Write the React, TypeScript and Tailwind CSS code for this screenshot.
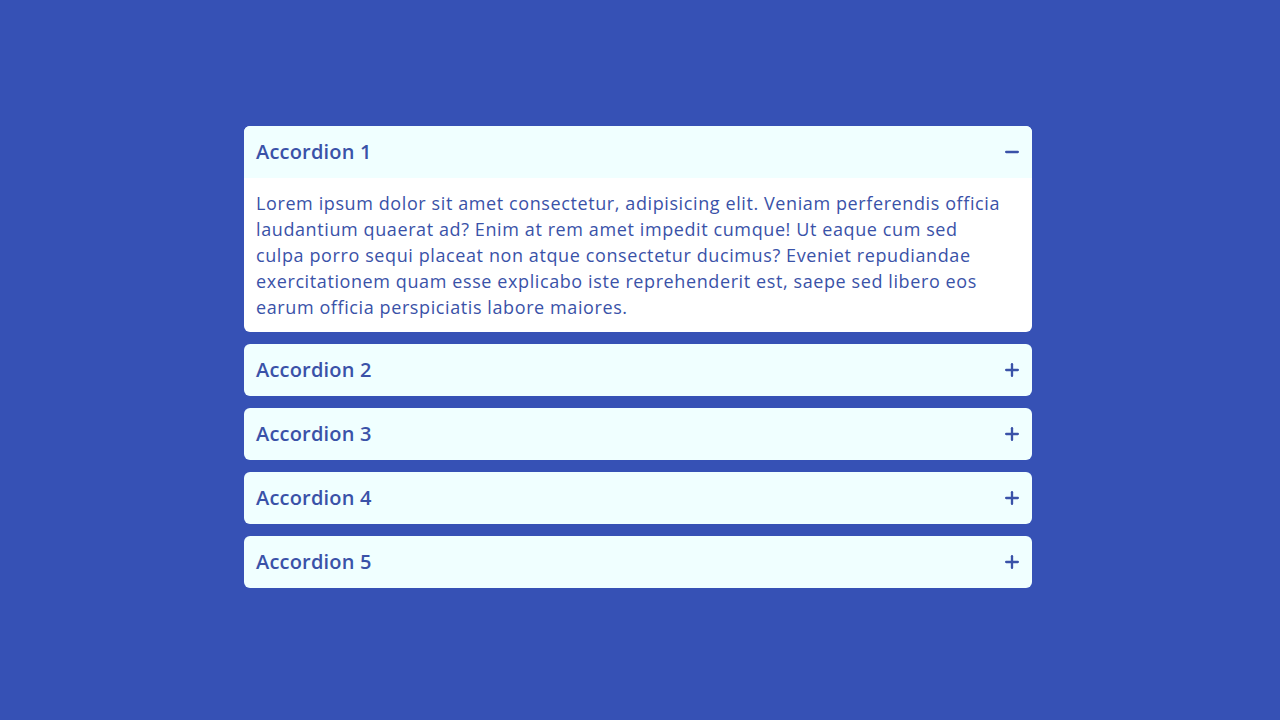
import React, { useState } from 'react';
import { Minus, Plus } from 'lucide-react';

const items = [
  {
    title: 'Accordion 1',
    body: 'Lorem ipsum dolor sit amet consectetur, adipisicing elit. Veniam perferendis officia laudantium quaerat ad? Enim at rem amet impedit cumque! Ut eaque cum sed culpa porro sequi placeat non atque consectetur ducimus? Eveniet repudiandae exercitationem quam esse explicabo iste reprehenderit est, saepe sed libero eos earum officia perspiciatis labore maiores.',
  },
  { title: 'Accordion 2', body: 'Lorem ipsum dolor sit amet consectetur, adipisicing elit.' },
  { title: 'Accordion 3', body: 'Lorem ipsum dolor sit amet consectetur, adipisicing elit.' },
  { title: 'Accordion 4', body: 'Lorem ipsum dolor sit amet consectetur, adipisicing elit.' },
  { title: 'Accordion 5', body: 'Lorem ipsum dolor sit amet consectetur, adipisicing elit.' },
];

const App: React.FC = () => {
  const [open, setOpen] = useState<number | null>(0);

  return (
    <div
      className="min-h-screen w-full bg-[#3651b5] flex justify-center pt-[126px] pr-1"
      style={{ fontFamily: '"Open Sans", "Liberation Sans", sans-serif' }}
    >
      <div className="w-[788px] flex flex-col gap-3">
        {items.map((item, i) => {
          const isOpen = open === i;
          return (
            <div key={item.title} className="bg-white rounded-md overflow-hidden">
              <button
                onClick={() => setOpen(isOpen ? null : i)}
                className="w-full h-[52px] bg-[#f0ffff] flex items-center justify-between pl-3 pr-[10px] text-[#3a52a8]"
              >
                <span className="text-[20px] font-semibold tracking-[0.2px]">{item.title}</span>
                {isOpen ? (
                  <Minus size={20} strokeWidth={2.8} />
                ) : (
                  <Plus size={20} strokeWidth={2.8} />
                )}
              </button>
              {isOpen && (
                <p className="pl-3 pr-6 py-3 text-[18px] leading-[26px] tracking-[0.6px] text-[#3a52a8]">
                  {item.body}
                </p>
              )}
            </div>
          );
        })}
      </div>
    </div>
  );
};

export default App;
